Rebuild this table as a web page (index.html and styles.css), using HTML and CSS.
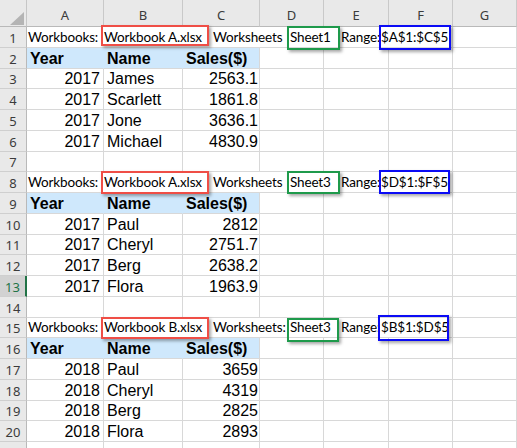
FILE: index.html
```html
<!DOCTYPE html>
<html>
<head>
<meta charset="utf-8">
<link rel="stylesheet" href="styles.css">
</head>
<body>
<div class="sheet">
  <div class="row head">
    <div class="corner"><div class="tri"></div></div>
    <div class="colh">A</div><div class="colh">B</div><div class="colh">C</div><div class="colh">D</div><div class="colh">E</div><div class="colh">F</div><div class="colh">G</div>
  </div>

  <div class="row">
    <div class="rh">1</div>
    <div class="c label"><span class="seg wb">Workbooks:</span><span class="seg file">Workbook A.xlsx</span><span class="seg ws">Worksheets</span><span class="seg sh">Sheet1</span><span class="seg rg">Range:</span><span class="seg">$A$1:$C$5</span></div>
    <div class="c"></div>
  </div>
  <div class="row">
    <div class="rh">2</div>
    <div class="c th">Year</div><div class="c th">Name</div><div class="c th last">Sales($)</div><div class="c"></div><div class="c"></div><div class="c"></div><div class="c"></div>
  </div>
  <div class="row">
    <div class="rh">3</div>
    <div class="c yr">2017</div><div class="c">James</div><div class="c amt">2563.1</div><div class="c"></div><div class="c"></div><div class="c"></div><div class="c"></div>
  </div>
  <div class="row">
    <div class="rh">4</div>
    <div class="c yr">2017</div><div class="c">Scarlett</div><div class="c amt">1861.8</div><div class="c"></div><div class="c"></div><div class="c"></div><div class="c"></div>
  </div>
  <div class="row">
    <div class="rh">5</div>
    <div class="c yr">2017</div><div class="c">Jone</div><div class="c amt">3636.1</div><div class="c"></div><div class="c"></div><div class="c"></div><div class="c"></div>
  </div>
  <div class="row">
    <div class="rh">6</div>
    <div class="c yr">2017</div><div class="c">Michael</div><div class="c amt">4830.9</div><div class="c"></div><div class="c"></div><div class="c"></div><div class="c"></div>
  </div>
  <div class="row">
    <div class="rh">7</div>
    <div class="c"></div><div class="c"></div><div class="c"></div><div class="c"></div><div class="c"></div><div class="c"></div><div class="c"></div>
  </div>

  <div class="row">
    <div class="rh">8</div>
    <div class="c label"><span class="seg wb">Workbooks:</span><span class="seg file">Workbook A.xlsx</span><span class="seg ws">Worksheets</span><span class="seg sh">Sheet3</span><span class="seg rg">Range:</span><span class="seg">$D$1:$F$5</span></div>
    <div class="c"></div>
  </div>
  <div class="row">
    <div class="rh">9</div>
    <div class="c th">Year</div><div class="c th">Name</div><div class="c th last">Sales($)</div><div class="c"></div><div class="c"></div><div class="c"></div><div class="c"></div>
  </div>
  <div class="row">
    <div class="rh">10</div>
    <div class="c yr">2017</div><div class="c">Paul</div><div class="c amt">2812</div><div class="c"></div><div class="c"></div><div class="c"></div><div class="c"></div>
  </div>
  <div class="row">
    <div class="rh">11</div>
    <div class="c yr">2017</div><div class="c">Cheryl</div><div class="c amt">2751.7</div><div class="c"></div><div class="c"></div><div class="c"></div><div class="c"></div>
  </div>
  <div class="row">
    <div class="rh">12</div>
    <div class="c yr">2017</div><div class="c">Berg</div><div class="c amt">2638.2</div><div class="c"></div><div class="c"></div><div class="c"></div><div class="c"></div>
  </div>
  <div class="row">
    <div class="rh sel">13</div>
    <div class="c yr">2017</div><div class="c">Flora</div><div class="c amt">1963.9</div><div class="c"></div><div class="c"></div><div class="c"></div><div class="c"></div>
  </div>
  <div class="row">
    <div class="rh">14</div>
    <div class="c"></div><div class="c"></div><div class="c"></div><div class="c"></div><div class="c"></div><div class="c"></div><div class="c"></div>
  </div>

  <div class="row">
    <div class="rh">15</div>
    <div class="c label"><span class="seg wb">Workbooks:</span><span class="seg file">Workbook B.xlsx</span><span class="seg ws">Worksheets:</span><span class="seg sh">Sheet3</span><span class="seg rg">Range:</span><span class="seg">$B$1:$D$5</span></div>
    <div class="c"></div>
  </div>
  <div class="row">
    <div class="rh">16</div>
    <div class="c th">Year</div><div class="c th">Name</div><div class="c th last">Sales($)</div><div class="c"></div><div class="c"></div><div class="c"></div><div class="c"></div>
  </div>
  <div class="row">
    <div class="rh">17</div>
    <div class="c yr">2018</div><div class="c">Paul</div><div class="c amt">3659</div><div class="c"></div><div class="c"></div><div class="c"></div><div class="c"></div>
  </div>
  <div class="row">
    <div class="rh">18</div>
    <div class="c yr">2018</div><div class="c">Cheryl</div><div class="c amt">4319</div><div class="c"></div><div class="c"></div><div class="c"></div><div class="c"></div>
  </div>
  <div class="row">
    <div class="rh">19</div>
    <div class="c yr">2018</div><div class="c">Berg</div><div class="c amt">2825</div><div class="c"></div><div class="c"></div><div class="c"></div><div class="c"></div>
  </div>
  <div class="row">
    <div class="rh">20</div>
    <div class="c yr">2018</div><div class="c">Flora</div><div class="c amt">2893</div><div class="c"></div><div class="c"></div><div class="c"></div><div class="c"></div>
  </div>
  <div class="row">
    <div class="rh"></div>
    <div class="c"></div><div class="c"></div><div class="c"></div><div class="c"></div><div class="c"></div><div class="c"></div><div class="c"></div>
  </div>

  <div class="box red r1"></div>
  <div class="box green g1"></div>
  <div class="box blue b1"></div>
  <div class="box red r8"></div>
  <div class="box green g8"></div>
  <div class="box blue b8"></div>
  <div class="box red r15"></div>
  <div class="box green g15"></div>
  <div class="box blue b15"></div>
</div>
</body>
</html>
```

FILE: styles.css
```css
html, body {
  margin: 0;
  padding: 0;
  background: #ffffff;
}

.sheet {
  position: relative;
  width: 517px;
  height: 448px;
  overflow: hidden;
  background: #ffffff;
}

.row {
  display: grid;
  grid-template-columns: 27px 77px 79px 77px 64px 65px 64px 64px;
  height: 20.75px;
}

.row.head {
  height: 27px;
}

.corner {
  background: #e9e9e9;
  border-right: 1px solid #c6c6c6;
  border-bottom: 1px solid #b9b9b9;
  box-sizing: border-box;
  display: flex;
  align-items: flex-end;
  justify-content: flex-end;
  padding: 0 2px 1px 0;
}

.tri {
  width: 0;
  height: 0;
  border-left: 14px solid transparent;
  border-bottom: 13px solid #b4b4b4;
}

.colh {
  background: #e9e9e9;
  border-right: 1px solid #c9c9c9;
  border-bottom: 1px solid #b9b9b9;
  box-sizing: border-box;
  display: flex;
  align-items: center;
  justify-content: center;
  padding-top: 3px;
  font: 13px/16px "Noto Sans", "Open Sans", sans-serif;
  color: #3b3b3b;
}

.rh {
  background: #e9e9e9;
  border-right: 1px solid #b9b9b9;
  border-bottom: 1px solid #cfcfcf;
  box-sizing: border-box;
  display: flex;
  align-items: flex-end;
  justify-content: center;
  padding-bottom: 1px;
  font: 13px/16px "Noto Sans", "Open Sans", sans-serif;
  color: #3b3b3b;
}

.rh.sel {
  background: #d2d2d2;
  color: #217346;
  border-right: 2px solid #217346;
}

.c {
  border-right: 1px solid #d8d8d8;
  border-bottom: 1px solid #d8d8d8;
  box-sizing: border-box;
  display: flex;
  align-items: flex-end;
  padding: 0 3px;
  font: 16px/18px "Liberation Sans", Arial, sans-serif;
  color: #000000;
  white-space: nowrap;
  overflow: visible;
  min-width: 0;
}

.c.yr {
  justify-content: flex-end;
  padding-right: 3px;
}

.c.amt {
  justify-content: flex-end;
  padding-right: 1px;
}

.c.th {
  font-weight: bold;
  background: #cfe8fc;
  border-right-color: #cfe8fc;
}

.c.th.last {
  border-right-color: #d8d8d8;
}

.c.label {
  grid-column: span 6;
  padding: 0 0 1px 1px;
  font: 13.5px/18px Lato, "Open Sans", sans-serif;
  letter-spacing: -0.15px;
  color: #000000;
}

.seg {
  display: inline-block;
  flex: none;
  white-space: nowrap;
}

.seg.wb { width: 76px; }
.seg.file { width: 109px; }
.seg.ws { width: 77px; }
.seg.sh { width: 51px; }
.seg.rg { width: 40px; }

.box {
  position: absolute;
  box-sizing: border-box;
  border: 2px solid;
  box-shadow: 2px 2px 3px rgba(0, 0, 0, 0.35);
  pointer-events: none;
}

.box.red { border-color: #ef4e46; }
.box.green { border-color: #1e9a4b; }
.box.blue { border-color: #0b0bf5; }

.r1 { left: 101px; top: 25px; width: 108px; height: 21px; }
.g1 { left: 287px; top: 26px; width: 53px; height: 24px; }
.b1 { left: 379px; top: 25px; width: 72px; height: 25px; }

.r8 { left: 101px; top: 171px; width: 108px; height: 23px; }
.g8 { left: 287px; top: 171px; width: 53px; height: 23px; }
.b8 { left: 379px; top: 170px; width: 71px; height: 24px; }

.r15 { left: 101px; top: 317px; width: 108px; height: 22px; }
.g15 { left: 287px; top: 318px; width: 52px; height: 24px; }
.b15 { left: 378px; top: 315px; width: 71px; height: 26px; }
```
